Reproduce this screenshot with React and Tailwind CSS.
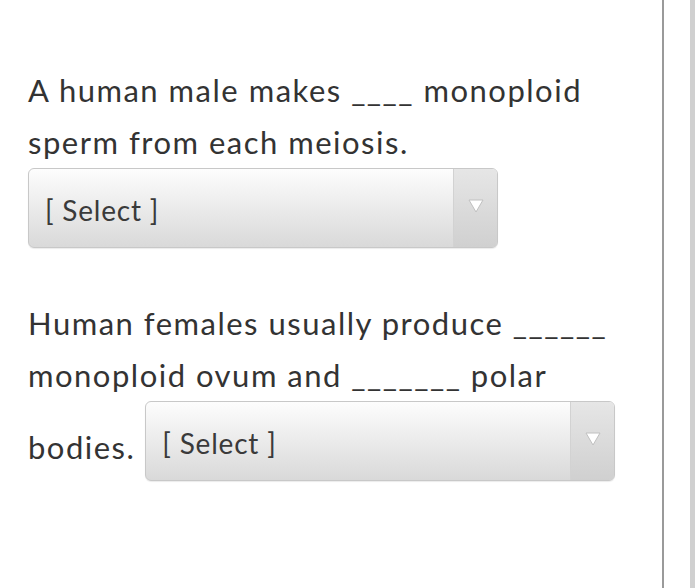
import React from "react";

const SelectBox = ({ className = "" }) => (
  <span
    className={
      "inline-flex h-[80px] w-[470px] shrink-0 rounded-[6px] border border-[#c8c8c8] bg-gradient-to-b from-[#fdfdfd] to-[#d9d9d9] shadow-[0_1px_1px_rgba(0,0,0,0.08)] overflow-hidden " +
      className
    }
  >
    <span className="flex flex-1 items-center pl-[16px] pt-[4px] text-[28px] tracking-[0.8px] leading-none text-[#3a3a3a]">
      [ Select ]
    </span>
    <span className="flex w-[44px] items-center justify-center border-l border-[#d2d2d2] bg-gradient-to-b from-[#e6e6e6] to-[#d0d0d0]">
      <svg width="18" height="18" viewBox="0 0 18 18" className="-mt-[4px]">
        <path d="M2 3 L16 3 L9 15 Z" fill="#ffffff" stroke="#c0c0c0" strokeWidth="1" strokeLinejoin="round" />
      </svg>
    </span>
  </span>
);

export default function App() {
  return (
    <div
      className="flex h-[588px] w-[700px] overflow-hidden bg-white text-[#333333]"
      style={{ fontFamily: "Lato, 'Noto Sans', sans-serif" }}
    >
      <div className="w-[662px] pl-[28px] pt-[64px] text-[31px] tracking-[1.5px] leading-[52px]">
        <p>
          A human male makes ____ monoploid
          <br />
          sperm from each meiosis.
        </p>
        <div>
          <SelectBox />
        </div>
        <p className="mt-[49px]">
          Human females usually produce ______
          <br />
          monoploid ovum and _______ polar
        </p>
        <div className="flex items-center">
          <span className="pt-[12px]">bodies.</span>
          <SelectBox className="ml-[10px]" />
        </div>
      </div>
      <div className="w-[2px] bg-[#9a9a9a]" />
      <div className="w-[26px]" />
      <div className="w-[5px] bg-[#d0d0d0]" />
      <div className="flex-1" />
    </div>
  );
}
